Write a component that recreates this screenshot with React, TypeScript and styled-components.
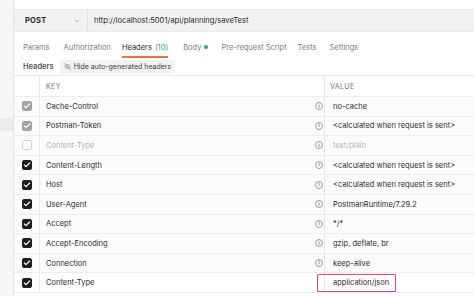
import React from "react";
import styled, { createGlobalStyle } from "styled-components";
import { ChevronDown, EyeOff, Check } from "lucide-react";

const Global = createGlobalStyle`
  html, body { margin: 0; padding: 0; background: #fff; }
  body { font-family: Inter, "Noto Sans", sans-serif; color: #212121; width: 474px; height: 296px; overflow: hidden; }
  * { box-sizing: border-box; }
`;

const Page = styled.div`
  display: flex;
  width: 474px;
  height: 296px;
`;

const Side = styled.div`
  width: 14px;
  flex: none;
  background: #f7f7f7;
  border-right: 1px solid #e4e4e4;
  display: flex;
  flex-direction: column;
  padding-top: 118px;
`;

const SideItem = styled.div`
  height: 13px;
  background: #ececec;
`;

const Main = styled.div`
  flex: 1;
  display: flex;
  flex-direction: column;
  min-width: 0;
`;

const UrlBar = styled.div`
  margin-top: 9px;
  height: 23px;
  display: flex;
  background: #f2f2f2;
  border-top: 1px solid #ebebeb;
  border-bottom: 1px solid #ebebeb;
`;

const Method = styled.div`
  width: 74px;
  display: flex;
  align-items: center;
  justify-content: space-between;
  padding: 0 6px 0 11px;
  border-right: 1px solid #e2e2e2;
  font-weight: 700;
  font-size: 7.5px;
  color: #2a2a2a;
  letter-spacing: 0.2px;
`;

const Url = styled.div`
  display: flex;
  align-items: center;
  padding-left: 6px;
  font-size: 7.6px;
  color: #2b2b2b;
  white-space: nowrap;
`;

const Tabs = styled.div`
  display: flex;
  margin-top: 5px;
  padding-left: 9px;
  height: 21px;
`;

const Tab = styled.div<{ $active?: boolean; $ml: number }>`
  margin-left: ${(p) => p.$ml}px;
  display: flex;
  align-items: center;
  height: 100%;
  font-size: 7.5px;
  color: ${(p) => (p.$active ? "#2a2a2a" : "#7c7c7c")};
  border-bottom: 2px solid ${(p) => (p.$active ? "#f0703c" : "transparent")};
  white-space: nowrap;
  padding-top: 1px;
`;

const Count = styled.span`
  color: #3d9b5c;
  margin-left: 3px;
`;

const Dot = styled.span`
  width: 4px;
  height: 4px;
  border-radius: 50%;
  background: #30a45a;
  margin-left: 3px;
`;

const SubBar = styled.div`
  display: flex;
  align-items: center;
  height: 17px;
  padding-left: 9px;
`;

const SubTitle = styled.div`
  font-size: 7.5px;
  font-weight: 600;
  color: #555;
`;

const HideBtn = styled.div`
  margin-left: 6px;
  height: 14px;
  padding: 0 4px 0 4px;
  display: flex;
  align-items: center;
  gap: 3px;
  background: #f2f2f2;
  border-radius: 2px;
  font-size: 7px;
  color: #3c3c3c;
  white-space: nowrap;
`;

const Table = styled.div`
  border-top: 1px solid #e8e8e8;
  display: flex;
  flex-direction: column;
`;

const Row = styled.div<{ $auto?: boolean; $h: number }>`
  display: grid;
  grid-template-columns: 26px 1fr 149px;
  height: ${(p) => p.$h}px;
  border-bottom: 1px solid #ececec;
  background: ${(p) => (p.$auto ? "#fbfbfb" : "#fff")};
`;

const CheckCell = styled.div`
  border-right: 1px solid #e8e8e8;
  display: flex;
  align-items: center;
  justify-content: center;
  padding-left: 1px;
`;

const KeyCell = styled.div<{ $dim?: boolean }>`
  border-right: 1px solid #e8e8e8;
  display: flex;
  align-items: center;
  justify-content: space-between;
  padding: 0 1px 0 6px;
  font-size: 7.5px;
  color: ${(p) => (p.$dim ? "#b3b3b3" : "#2b2b2b")};
`;

const ValueCell = styled.div<{ $dim?: boolean }>`
  position: relative;
  display: flex;
  align-items: center;
  padding-left: 8px;
  font-size: 7.5px;
  color: ${(p) => (p.$dim ? "#b3b3b3" : "#2b2b2b")};
  white-space: nowrap;
`;

const HeadLabel = styled.span<{ $shift?: number }>`
  font-size: 7px;
  color: #707070;
  letter-spacing: 0.4px;
  margin-left: ${(p) => p.$shift ?? 0}px;
`;

const Box = styled.div<{ $kind: "gray" | "black" | "empty" }>`
  width: 10px;
  height: 10px;
  border-radius: 2px;
  display: flex;
  align-items: center;
  justify-content: center;
  background: ${(p) => (p.$kind === "gray" ? "#a3a3a3" : p.$kind === "black" ? "#1e1e1e" : "#fff")};
  border: 1px solid ${(p) => (p.$kind === "gray" ? "#a3a3a3" : p.$kind === "black" ? "#1e1e1e" : "#d4d4d4")};
`;

const Info = styled.span`
  width: 8px;
  height: 8px;
  border-radius: 50%;
  border: 0.8px solid #9c9c9c;
  color: #9c9c9c;
  font-size: 5.5px;
  font-weight: 700;
  display: flex;
  align-items: center;
  justify-content: center;
  font-family: "DejaVu Sans", sans-serif;
  line-height: 1;
`;

const Highlight = styled.div`
  position: absolute;
  left: -8px;
  top: 1px;
  width: 79px;
  height: 18px;
  border: 1.6px solid #d8457e;
  border-radius: 1px;
`;

type H = { key: string; value: string; kind: "gray" | "black" | "empty"; auto: boolean };

const rows: H[] = [
  { key: "Cache-Control", value: "no-cache", kind: "gray", auto: true },
  { key: "Postman-Token", value: "<calculated when request is sent>", kind: "gray", auto: true },
  { key: "Content-Type", value: "text/plain", kind: "empty", auto: true },
  { key: "Content-Length", value: "<calculated when request is sent>", kind: "black", auto: true },
  { key: "Host", value: "<calculated when request is sent>", kind: "black", auto: true },
  { key: "User-Agent", value: "PostmanRuntime/7.29.2", kind: "black", auto: true },
  { key: "Accept", value: "*/*", kind: "black", auto: true },
  { key: "Accept-Encoding", value: "gzip, deflate, br", kind: "black", auto: true },
  { key: "Connection", value: "keep-alive", kind: "black", auto: true },
  { key: "Content-Type", value: "application/json", kind: "black", auto: false },
];

const tabs: { label: string; ml: number }[] = [
  { label: "Params", ml: 0 },
  { label: "Authorization", ml: 14 },
  { label: "Headers", ml: 11 },
  { label: "Body", ml: 15 },
  { label: "Pre-request Script", ml: 13 },
  { label: "Tests", ml: 11 },
  { label: "Settings", ml: 13 },
];

export default function App() {
  return (
    <>
      <Global />
      <Page>
        <Side>
          <SideItem />
        </Side>
        <Main>
          <UrlBar>
            <Method>
              POST
              <ChevronDown size={8} color="#8a8a8a" strokeWidth={2} />
            </Method>
            <Url>http://localhost:5001/api/planning/saveTest</Url>
          </UrlBar>
          <Tabs>
            {tabs.map((t) => (
              <Tab key={t.label} $ml={t.ml} $active={t.label === "Headers"}>
                {t.label}
                {t.label === "Headers" && <Count>(10)</Count>}
                {t.label === "Body" && <Dot />}
              </Tab>
            ))}
          </Tabs>
          <SubBar>
            <SubTitle>Headers</SubTitle>
            <HideBtn>
              <EyeOff size={7} color="#777" strokeWidth={2} />
              Hide auto-generated headers
            </HideBtn>
          </SubBar>
          <Table>
            <Row $h={21} $auto={false}>
              <CheckCell />
              <KeyCell>
                <HeadLabel>KEY</HeadLabel>
              </KeyCell>
              <ValueCell>
                <HeadLabel $shift={-3}>VALUE</HeadLabel>
              </ValueCell>
            </Row>
            {rows.map((r, i) => (
              <Row key={i} $h={19.6} $auto={r.auto}>
                <CheckCell>
                  <Box $kind={r.kind}>
                    {r.kind !== "empty" && <Check size={8} color="#fff" strokeWidth={3.5} />}
                  </Box>
                </CheckCell>
                <KeyCell $dim={r.kind === "empty"}>
                  {r.key}
                  {r.auto && <Info>i</Info>}
                </KeyCell>
                <ValueCell $dim={r.kind === "empty"}>
                  {r.value}
                  {!r.auto && <Highlight />}
                </ValueCell>
              </Row>
            ))}
          </Table>
        </Main>
      </Page>
    </>
  );
}
